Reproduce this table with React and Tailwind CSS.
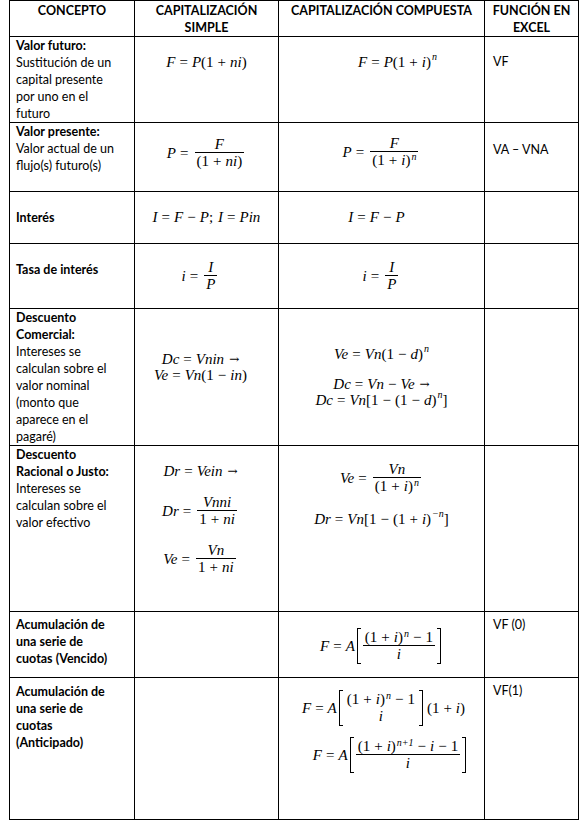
import React from "react";

// variable (italic), operator with math spacing, superscript
const V = ({ children }) => <i>{children}</i>;
const Op = ({ children }) => <span className="px-[4px] not-italic">{children}</span>;
const Sup = ({ children }) => (
  <sup className="text-[10px] italic relative -top-[5px] pl-[1px]">{children}</sup>
);
const Arrow = () => <span className="pl-[5px] font-['DejaVu_Serif',serif] text-[12px]">→</span>;

const Frac = ({ num, den, bar = true }) => (
  <span className="inline-flex flex-col items-center mx-[2px]">
    <span className="px-[2px] leading-[16px] whitespace-nowrap">{num}</span>
    <span className={bar ? "w-full h-0 border-t border-black" : "w-full h-0 border-t border-transparent"} />
    <span className="px-[2px] leading-[17px] whitespace-nowrap">{den}</span>
  </span>
);

const Br = ({ children, ext = "" }) => (
  <span className={"inline-flex items-stretch mx-[2px] " + ext}>
    <span className="w-[4px] border-l border-y border-black" />
    <span className="flex items-center py-[1px]">{children}</span>
    <span className="w-[4px] border-r border-y border-black" />
  </span>
);

const Eq = ({ children, className = "", lh = "leading-[18px]" }) => (
  <div className={"flex items-center justify-center whitespace-nowrap " + lh + " " + className}>
    {children}
  </div>
);

const Td = ({ children, className = "" }) => (
  <td className={"border border-black align-top " + className}>{children}</td>
);

const Math = ({ children, className = "" }) => (
  <Td className={"font-['Liberation_Serif','DejaVu_Serif',serif] text-[15px] px-[4px] " + className}>
    {children}
  </Td>
);

export default function App() {
  return (
    <div className="bg-white w-[579px] h-[822px] text-black">
      <table className="ml-[9px] w-[569px] table-fixed border-collapse font-['Lato','Noto_Sans',sans-serif] text-[12.5px] leading-[17px]">
        <colgroup>
          <col className="w-[125px]" />
          <col className="w-[144px]" />
          <col className="w-[206px]" />
          <col className="w-[94px]" />
        </colgroup>
        <tbody>
          <tr className="h-[35px]">
            <Td className="font-bold text-center pt-[1px]">CONCEPTO</Td>
            <Td className="font-bold text-center pt-[1px]">
              CAPITALIZACIÓN
              <br />
              SIMPLE
            </Td>
            <Td className="font-bold text-center pt-[1px]">CAPITALIZACIÓN COMPUESTA</Td>
            <Td className="font-bold text-center pt-[1px]">
              FUNCIÓN EN
              <br />
              EXCEL
            </Td>
          </tr>

          <tr className="h-[86px]">
            <Td className="px-[6px] whitespace-nowrap">
              <b>Valor futuro:</b>
              <br />
              Sustitución de un
              <br />
              capital presente
              <br />
              por uno en el
              <br />
              futuro
            </Td>
            <Math className="pt-[16px]">
              <Eq>
                <V>F</V><Op>=</Op><V>P</V>(1<Op>+</Op><V>ni</V>)
              </Eq>
            </Math>
            <Math className="pt-[16px] pl-[36px]">
              <Eq>
                <V>F</V><Op>=</Op><V>P</V>(1<Op>+</Op><V>i</V>)<Sup>n</Sup>
              </Eq>
            </Math>
            <Td className="px-[8px] pt-[16px]">VF</Td>
          </tr>

          <tr className="h-[69px]">
            <Td className="px-[6px] whitespace-nowrap">
              <b>Valor presente:</b>
              <br />
              Valor actual de un
              <br />
              flujo(s) futuro(s)
            </Td>
            <Math className="pt-[13px]">
              <Eq>
                <V>P</V><Op>=</Op>
                <Frac num={<V>F</V>} den={<span>(1<Op>+</Op><V>ni</V>)</span>} />
              </Eq>
            </Math>
            <Math className="pt-[12px]">
              <Eq>
                <V>P</V><Op>=</Op>
                <Frac num={<V>F</V>} den={<span>(1<Op>+</Op><V>i</V>)<Sup>n</Sup></span>} />
              </Eq>
            </Math>
            <Td className="px-[8px] pt-[18px]">VA – VNA</Td>
          </tr>

          <tr className="h-[52px]">
            <Td className="px-[6px] pt-[17px] font-bold">Interés</Td>
            <Math className="pt-[16px]">
              <Eq>
                <V>I</V><Op>=</Op><V>F</V><Op>−</Op><V>P</V>;<span className="w-[5px]" />
                <V>I</V><Op>=</Op><V>Pin</V>
              </Eq>
            </Math>
            <Math className="pt-[16px] pr-[14px]">
              <Eq>
                <V>I</V><Op>=</Op><V>F</V><Op>−</Op><V>P</V>
              </Eq>
            </Math>
            <Td />
          </tr>

          <tr className="h-[65px]">
            <Td className="px-[6px] pt-[17px] font-bold">Tasa de interés</Td>
            <Math className="pt-[15px] pr-[16px]">
              <Eq>
                <V>i</V><Op>=</Op>
                <Frac num={<V>I</V>} den={<V>P</V>} />
              </Eq>
            </Math>
            <Math className="pt-[15px]">
              <Eq>
                <V>i</V><Op>=</Op>
                <Frac num={<V>I</V>} den={<V>P</V>} />
              </Eq>
            </Math>
            <Td />
          </tr>

          <tr className="h-[137px]">
            <Td className="px-[6px] whitespace-nowrap">
              <b>
                Descuento
                <br />
                Comercial:
              </b>
              <br />
              Intereses se
              <br />
              calculan sobre el
              <br />
              valor nominal
              <br />
              (monto que
              <br />
              aparece en el
              <br />
              pagaré)
            </Td>
            <Math className="pt-[42px] pr-[16px]">
              <Eq lh="leading-[16px]">
                <V>Dc</V><Op>=</Op><V>Vnin</V><Arrow />
              </Eq>
              <Eq lh="leading-[16px]">
                <V>Ve</V><Op>=</Op><V>Vn</V>(1<Op>−</Op><V>in</V>)
              </Eq>
            </Math>
            <Math className="pt-[36px]">
              <Eq>
                <V>Ve</V><Op>=</Op><V>Vn</V>(1<Op>−</Op><V>d</V>)<Sup>n</Sup>
              </Eq>
              <Eq lh="leading-[16px]" className="mt-[13px]">
                <V>Dc</V><Op>=</Op><V>Vn</V><Op>−</Op><V>Ve</V><Arrow />
              </Eq>
              <Eq lh="leading-[16px]">
                <V>Dc</V><Op>=</Op><V>Vn</V>[1<Op>−</Op>(1<Op>−</Op><V>d</V>)<Sup>n</Sup>]
              </Eq>
            </Math>
            <Td />
          </tr>

          <tr className="h-[166px]">
            <Td className="px-[6px] whitespace-nowrap">
              <b>
                Descuento
                <br />
                Racional o Justo:
              </b>
              <br />
              Intereses se
              <br />
              calculan sobre el
              <br />
              valor efectivo
            </Td>
            <Math className="pt-[16px] pr-[16px]">
              <Eq>
                <V>Dr</V><Op>=</Op><V>Vein</V><Arrow />
              </Eq>
              <Eq className="mt-[14px]">
                <V>Dr</V><Op>=</Op>
                <Frac num={<V>Vnni</V>} den={<span>1<Op>+</Op><V>ni</V></span>} />
              </Eq>
              <Eq className="mt-[14px]">
                <V>Ve</V><Op>=</Op>
                <Frac num={<V>Vn</V>} den={<span>1<Op>+</Op><V>ni</V></span>} />
              </Eq>
            </Math>
            <Math className="pt-[15px]">
              <Eq>
                <V>Ve</V><Op>=</Op>
                <Frac num={<V>Vn</V>} den={<span>(1<Op>+</Op><V>i</V>)<Sup>n</Sup></span>} />
              </Eq>
              <Eq className="mt-[15px]">
                <V>Dr</V><Op>=</Op><V>Vn</V>[1<Op>−</Op>(1<Op>+</Op><V>i</V>)<Sup>−n</Sup>]
              </Eq>
            </Math>
            <Td />
          </tr>

          <tr className="h-[66px]">
            <Td className="px-[6px] pt-[4px] font-bold whitespace-nowrap">
              Acumulación de
              <br />
              una serie de
              <br />
              cuotas (Vencido)
            </Td>
            <Td />
            <Math className="pt-[16px]">
              <Eq>
                <V>F</V><Op>=</Op><V>A</V>
                <Br>
                  <Frac num={<span>(1<Op>+</Op><V>i</V>)<Sup>n</Sup><Op>−</Op>1</span>} den={<V>i</V>} />
                </Br>
              </Eq>
            </Math>
            <Td className="px-[8px] pt-[4px]">VF (0)</Td>
          </tr>

          <tr className="h-[142px]">
            <Td className="px-[6px] pt-[5px] font-bold whitespace-nowrap">
              Acumulación de
              <br />
              una serie de
              <br />
              cuotas
              <br />
              (Anticipado)
            </Td>
            <Td />
            <Math className="pt-[12px] pl-[8px]">
              <Eq>
                <V>F</V><Op>=</Op><V>A</V>
                <Br>
                  <Frac bar={false} num={<span>(1<Op>+</Op><V>i</V>)<Sup>n</Sup><Op>−</Op>1</span>} den={<V>i</V>} />
                </Br>
                <span className="pl-[2px]">(1<Op>+</Op><V>i</V>)</span>
              </Eq>
              <Eq className="mt-[11px] pl-[14px]">
                <V>F</V><Op>=</Op><V>A</V>
                <Br ext="pb-[14px] -mb-[14px]">
                  <Frac
                    num={<span>(1<Op>+</Op><V>i</V>)<Sup>n+1</Sup><Op>−</Op><V>i</V><Op>−</Op>1</span>}
                    den={<V>i</V>}
                  />
                </Br>
              </Eq>
            </Math>
            <Td className="px-[8px] pt-[4px]">VF(1)</Td>
          </tr>
        </tbody>
      </table>
    </div>
  );
}
